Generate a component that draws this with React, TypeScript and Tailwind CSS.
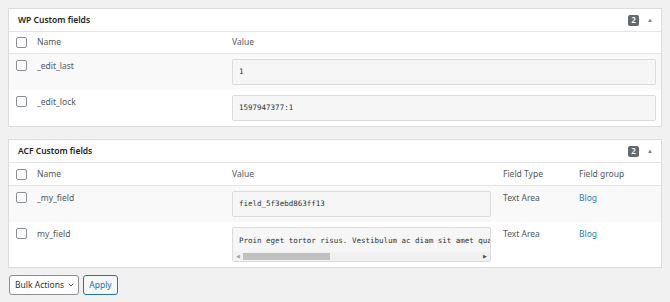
import { ChevronDown } from 'lucide-react'

function Checkbox() {
  return <span className="block h-[11px] w-[11px] rounded-[2px] border border-[#8c8f94] bg-white" />
}

function PanelHeader({ title }: { title: string }) {
  return (
    <div className="flex h-[23px] items-center border-b border-[#e2e4e7] pl-[9px] pr-[8px]">
      <h2 className="flex-1 text-[8.5px] font-semibold text-[#1d2327]">{title}</h2>
      <span className="flex h-[11px] w-[11px] items-center justify-center rounded-[2px] bg-[#646970] text-[8px] font-semibold text-white">
        2
      </span>
      <span className="ml-[8px] text-[6px] leading-none text-[#787c82]">▲</span>
    </div>
  )
}

function ValueBox({ value, className = '' }: { value: string; className?: string }) {
  return (
    <div
      className={`flex h-[26px] items-center rounded-[2px] border border-[#dcdcde] bg-[#f6f6f6] px-[6px] font-['DejaVu_Sans_Mono',monospace] text-[7.5px] text-[#2c3338] ${className}`}
    >
      {value}
    </div>
  )
}

const wpRows = [
  { name: '_edit_last', value: '1' },
  { name: '_edit_lock', value: '1597947377:1' },
]

export default function App() {
  return (
    <div className="min-h-[302px] bg-[#f1f1f1] px-2 pt-2 font-['Noto_Sans',sans-serif] text-[8.5px] text-[#50575e]">
      <section className="border border-[#dcdcde] bg-white">
        <PanelHeader title="WP Custom fields" />
        <div className="flex h-[22px] items-center border-b border-[#e2e4e7]">
          <div className="w-[28px] pl-[7px]">
            <Checkbox />
          </div>
          <div className="w-[195px]">Name</div>
          <div>Value</div>
        </div>
        {wpRows.map((row, i) => (
          <div key={row.name} className={`flex h-[36px] ${i % 2 === 0 ? 'bg-[#f9f9f9]' : 'bg-white'}`}>
            <div className="w-[28px] pl-[7px] pt-[6px]">
              <Checkbox />
            </div>
            <div className="w-[195px] pt-[6px]">{row.name}</div>
            <div className="flex-1 pr-[5px] pt-[5px]">
              <ValueBox value={row.value} />
            </div>
          </div>
        ))}
      </section>

      <section className="mt-[12px] border border-[#dcdcde] bg-white">
        <PanelHeader title="ACF Custom fields" />
        <div className="flex h-[23px] items-center border-b border-[#e2e4e7]">
          <div className="w-[28px] pl-[7px]">
            <Checkbox />
          </div>
          <div className="w-[195px]">Name</div>
          <div className="w-[271px]">Value</div>
          <div className="w-[76px]">Field Type</div>
          <div>Field group</div>
        </div>
        <div className="flex h-[36px] bg-[#f9f9f9]">
          <div className="w-[28px] pl-[7px] pt-[6px]">
            <Checkbox />
          </div>
          <div className="w-[195px] pt-[6px]">_my_field</div>
          <div className="w-[271px] pt-[5px]">
            <ValueBox value="field_5f3ebd863ff13" className="w-[259px]" />
          </div>
          <div className="w-[76px] pt-[6px]">Text Area</div>
          <div className="pt-[6px] text-[#2e7fb0]">Blog</div>
        </div>
        <div className="flex h-[45px] bg-white">
          <div className="w-[28px] pl-[7px] pt-[6px]">
            <Checkbox />
          </div>
          <div className="w-[195px] pt-[6px]">my_field</div>
          <div className="w-[271px] pt-[5px]">
            <div className="flex h-[35px] w-[259px] flex-col overflow-hidden rounded-[2px] border border-[#dcdcde] bg-[#f6f6f6]">
              <div className="flex-1 overflow-hidden whitespace-nowrap px-[6px] pt-[7px] font-['DejaVu_Sans_Mono',monospace] text-[7.5px] text-[#2c3338]">
                Proin eget tortor risus. Vestibulum ac diam sit amet qua
              </div>
              <div className="flex h-[9px] items-center bg-[#f1f1f1]">
                <span className="w-[10px] text-center text-[5px] leading-none text-[#a3a3a3]">◀</span>
                <span className="h-[7px] w-[87px] bg-[#c1c1c1]" />
                <span className="flex-1" />
                <span className="w-[10px] text-center text-[5px] leading-none text-[#505050]">▶</span>
              </div>
            </div>
          </div>
          <div className="w-[76px] pt-[6px]">Text Area</div>
          <div className="pt-[6px] text-[#2e7fb0]">Blog</div>
        </div>
      </section>

      <div className="mt-[7px] flex gap-[4px] pl-px">
        <button
          type="button"
          className="flex h-[20px] w-[70px] items-center gap-[3px] whitespace-nowrap rounded-[3px] border border-[#8c8f94] bg-white pl-[5px] text-[8.5px] text-[#2c3338]"
        >
          Bulk Actions
          <ChevronDown className="h-[8px] w-[8px]" strokeWidth={2.5} />
        </button>
        <button
          type="button"
          className="h-[20px] w-[35px] rounded-[3px] border border-[#2271b1] bg-[#f6f7f7] text-[8.5px] text-[#2271b1]"
        >
          Apply
        </button>
      </div>
    </div>
  )
}
